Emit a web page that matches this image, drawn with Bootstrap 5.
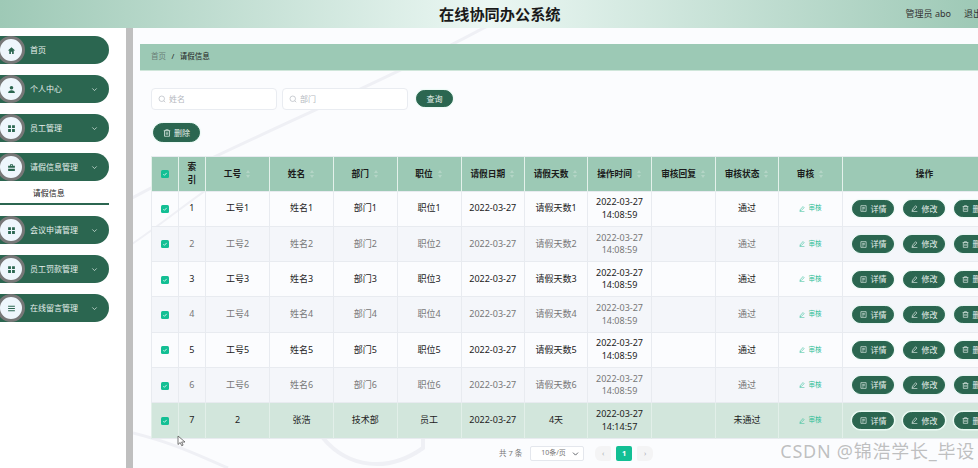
<!DOCTYPE html>
<html lang="zh-CN">
<head>
  <meta charset="UTF-8" />
  <meta name="viewport" content="width=device-width, initial-scale=1.0" />
  <title>在线协同办公系统</title>
  <link href="https://cdn.jsdelivr.net/npm/bootstrap@5.3.0/dist/css/bootstrap.min.css" rel="stylesheet" />
  <style>
    html, body { height: 100%; }
    body {
      overflow: hidden;
      background: #fff;
      color: #222;
      font-family: "Noto Sans", "Noto Sans CJK SC", sans-serif;
      font-size: 9px;
    }
    svg { display: block; flex: none; }

    .top-bar {
      height: 28px;
      padding-left: 439px;
      background: linear-gradient(90deg, #9ec9b6, #ebf7f3 50%, #9ec9b6);
    }
    .top-title { font-size: 15.2px; font-weight: 700; color: #1a1a1a; white-space: nowrap; }
    .top-user { font-size: 9px; color: #333; gap: 13px; margin-right: -4px; white-space: nowrap; }

    .page-body { height: 440px; }
    .side-menu { width: 133px; border-right: 7px solid #bfbfbf; padding-top: 8px; gap: 11px; }
    .menu-pill {
      width: 108.5px;
      height: 28px;
      padding-right: 11px;
      background: #2b6650;
      color: #e6f0ec;
      font-size: 8px;
      border-radius: 0 14px 14px 0;
    }
    .menu-dot {
      width: 28px;
      height: 28px;
      margin-left: -3px;
      margin-right: 5px;
      background: #eef6fc;
      border: 3px solid #777;
      color: #2b6650;
    }
    .menu-arrow { margin-left: auto; }
    .menu-sub {
      width: 108.5px;
      height: 24px;
      margin-top: -11px;
      padding: 2px 11px 0 0;
      font-size: 8px;
      color: #222;
      border-bottom: 2px solid #2b6650;
    }

    .main-area { background: #fbfcfe; padding: 16px 0 0 7px; min-width: 0; }
    .back-swoosh { left: 0; top: 0; z-index: 0; }
    .main-area > *:not(.back-swoosh) { position: relative; z-index: 1; }
    .crumb-bar { height: 27px; margin-bottom: 16.5px; padding-left: 11px; background: #9cc9b5; border-bottom: 1px solid #cfe6da; }
    .crumb-bar .breadcrumb { font-size: 7.5px; --bs-breadcrumb-margin-bottom: 0; --bs-breadcrumb-item-padding-x: 5.5px; --bs-breadcrumb-divider-color: #222; }
    .crumb-bar .breadcrumb-item a { color: #6a7d75; text-decoration: none; }
    .crumb-bar .breadcrumb-item.active { color: #222; }

    .search-row { padding-left: 11px; height: 22px; gap: 5px; margin-bottom: 13.5px; }
    .search-box {
      width: 126px;
      height: 22px;
      padding-left: 6px;
      gap: 3px;
      background: #fff;
      border: 1px solid #e9ecf1;
      border-radius: 4px;
      color: #b5b9c0;
    }
    .search-box .form-control { border: 0; padding: 0; font-size: 8px; background: transparent; border-radius: 0; box-shadow: none; }
    .search-box .form-control::placeholder { color: #b5b9c0; }
    .dark-btn {
      --bs-btn-bg: #2b6650;
      --bs-btn-border-color: #2b6650;
      --bs-btn-color: #e6f0ec;
      --bs-btn-hover-bg: #23543f;
      --bs-btn-hover-border-color: #23543f;
      --bs-btn-hover-color: #fff;
      --bs-btn-padding-x: 0;
      --bs-btn-padding-y: 0;
      --bs-btn-font-size: 8px;
      --bs-btn-line-height: 1;
      box-shadow: 0 0 2px #c9f2df;
    }
    .btn-query { width: 37px; height: 17.5px; margin-left: 3px; }
    .btn-remove { width: 47px; height: 19px; margin: 0 0 14px 13px; gap: 3px; }

    .table-clip { margin-left: 11px; overflow: hidden; }
    .leave-table {
      table-layout: fixed;
      width: 855px;
      margin: 0;
      font-size: 9px;
      --bs-table-bg: transparent;
      --bs-table-border-color: #e8ebf0;
    }
    .leave-table > :not(caption) > * > * { padding: 0; text-align: center; vertical-align: middle; line-height: 12.5px; }
    .leave-table thead th {
      height: 34.6px;
      background: #9cc9b5;
      border-color: #e4f1eb;
      color: #1b1b1b;
      font-size: 8.7px;
      font-weight: 700;
    }
    .leave-table tbody tr { height: 35.3px; }
    .leave-table tbody td { color: #222; font-weight: 400; }
    .leave-table tbody tr:nth-child(even) td { background: #f4f6fa; color: #777; }
    .leave-table tbody tr.row-new td { background: #d2e6dc; color: #222; border-color: #e2efe9; }
    .sort-mark { display: inline-block; width: 5px; height: 8px; margin-left: 5px; vertical-align: -1px; position: relative; }
    .sort-mark::before, .sort-mark::after {
      content: "";
      position: absolute;
      left: 0;
      border-left: 2.5px solid transparent;
      border-right: 2.5px solid transparent;
    }
    .sort-mark::before { top: 0; border-bottom: 3px solid #b4d5c6; }
    .sort-mark::after { bottom: 0; border-top: 3px solid #b4d5c6; }
    .tick-box {
      display: inline-flex;
      align-items: center;
      justify-content: center;
      width: 8px;
      height: 8px;
      background: #13bf94;
      border-radius: 1.5px;
      vertical-align: middle;
    }
    .audit-link { color: #2dbd96; font-size: 6.6px; gap: 3px; text-decoration: none; }
    .row-btns { padding-left: 9px; gap: 9px; }
    .btn-row { width: 42px; height: 17.5px; gap: 4px; font-size: 8px; }
    .row-new .btn-row { box-shadow: 0 0 0 1.5px #eafaf3; }

    .pager-row { height: 30px; padding-left: 359px; gap: 8px; color: #777; font-size: 7.5px; }
    .pager-row .form-select {
      width: 54px;
      height: 15px;
      margin-right: 3px;
      padding: 0 0 0 10px;
      font-size: 7px;
      color: #777;
      border-color: #e4e7ed;
      border-radius: 2px;
      background-position: right 4px center;
      background-size: 7px 6px;
      box-shadow: none;
    }
    .pager-row .pagination { margin: 0; gap: 6px; }
    .pager-row .page-link {
      width: 16px;
      height: 15px;
      padding: 0;
      display: flex;
      align-items: center;
      justify-content: center;
      font-size: 7.5px;
      line-height: 1;
      background: #f4f4f5;
      border: 0;
      border-radius: 2px;
      color: #a8abb2;
    }
    .pager-row .page-item.active .page-link { background: #12bf94; color: #fff; font-weight: 700; }

    .csdn-mark {
      right: 3px;
      bottom: 7px;
      z-index: 5;
      font-size: 18px;
      line-height: 20px;
      letter-spacing: .75px;
      color: rgba(130, 130, 130, .5);
      white-space: nowrap;
    }
    .mouse-arrow { left: 177px; top: 435px; z-index: 6; }
  </style>
</head>
<body>
  <svg width="0" height="0" class="position-absolute">
    <symbol id="i-home" viewBox="0 0 16 16"><path fill="currentColor" d="M8 2 1.500 8H4v6h3v-4h2v4h3V8h2.500z"/></symbol>
    <symbol id="i-user" viewBox="0 0 16 16"><circle fill="currentColor" cx="8" cy="5" r="3.200"/><path fill="currentColor" d="M2 14c0-3 2.500-4.500 6-4.500s6 1.500 6 4.500z"/></symbol>
    <symbol id="i-grid" viewBox="0 0 16 16"><path fill="currentColor" d="M2 2h5v5H2zM9 2h5v5H9zM2 9h5v5H2zM9 9h5v5H9z"/></symbol>
    <symbol id="i-case" viewBox="0 0 16 16"><path fill="currentColor" d="M5.500 2h5v3H14v9H2V5h3.500zM7 3.500V5h2V3.500zM2 8.500v1.500h12V8.500z"/></symbol>
    <symbol id="i-list" viewBox="0 0 16 16"><path fill="currentColor" d="M2 3h12v2H2zM2 7h12v2H2zM2 11h12v2H2z"/></symbol>
    <symbol id="i-down" viewBox="0 0 16 16"><path fill="none" stroke="currentColor" stroke-width="1.600" d="m3 5.500 5 5 5-5"/></symbol>
    <symbol id="i-find" viewBox="0 0 16 16"><circle fill="none" stroke="currentColor" stroke-width="1.400" cx="7.500" cy="7.500" r="5.500"/><path fill="none" stroke="currentColor" stroke-width="1.400" d="m11.500 11.500 3 3"/></symbol>
    <symbol id="i-bin" viewBox="0 0 16 16"><path fill="none" stroke="currentColor" stroke-width="1.500" d="M1.500 3.500h13M5.500 3.500V1.500h5v2M3 3.500v11h10v-11M6.500 6.500v5M9.500 6.500v5"/></symbol>
    <symbol id="i-doc" viewBox="0 0 16 16"><path fill="none" stroke="currentColor" stroke-width="1.500" d="M2 1.500h12v13H2zM5 5.500h6M5 8.500h6M5 11.500h3"/></symbol>
    <symbol id="i-pen" viewBox="0 0 16 16"><path fill="none" stroke="currentColor" stroke-width="1.500" d="M10.500 1.500 13.500 4.500 6 12 2.500 13 3.500 9.500zM1.500 15h13"/></symbol>
    <symbol id="i-tick" viewBox="0 0 16 16"><path fill="none" stroke="currentColor" stroke-width="2" d="m3.500 8.500 3 3 6-6.500"/></symbol>
  </svg>

  <header class="top-bar d-flex align-items-center">
    <div class="top-title">在线协同办公系统</div>
    <div class="top-user d-flex ms-auto">
      <span>管理员 abo</span>
      <span>退出</span>
    </div>
  </header>

  <div class="page-body d-flex">
    <aside class="side-menu d-flex flex-column flex-shrink-0" id="menu"></aside>

    <main class="main-area flex-grow-1 position-relative overflow-hidden">
      <svg class="back-swoosh position-absolute" width="845" height="440" viewBox="0 0 845 440">
        <g fill="none" stroke="#eff0f5">
          <path stroke-width="3" d="M-10 175C90 120 240 60 360 -5"/>
          <path stroke-width="2" d="M-10 222C40 190 80 150 130 130"/>
          <path stroke-width="3" d="M0 405C40 415 60 425 95 440"/>
          <path stroke-width="4" d="M190 410C215 440 255 445 290 420V395"/>
        </g>
      </svg>

      <nav class="crumb-bar d-flex align-items-center">
        <ol class="breadcrumb">
          <li class="breadcrumb-item"><a href="#">首页</a></li>
          <li class="breadcrumb-item active">请假信息</li>
        </ol>
      </nav>

      <div class="search-row d-flex align-items-center">
        <label class="search-box d-flex align-items-center">
          <svg width="8" height="8"><use href="#i-find"/></svg>
          <input class="form-control" placeholder="姓名" />
        </label>
        <label class="search-box d-flex align-items-center">
          <svg width="8" height="8"><use href="#i-find"/></svg>
          <input class="form-control" placeholder="部门" />
        </label>
        <button class="btn dark-btn rounded-pill btn-query">查询</button>
      </div>

      <button class="btn dark-btn rounded-pill btn-remove d-flex align-items-center justify-content-center">
        <svg width="8" height="8"><use href="#i-bin"/></svg>删除
      </button>

      <div class="table-clip">
        <table class="table table-bordered leave-table">
          <colgroup>
            <col style="width:26.5px"><col style="width:27.5px"><col style="width:64px"><col style="width:64px"><col style="width:63.500px"><col style="width:64px"><col style="width:63.500px"><col style="width:63px"><col style="width:64px"><col style="width:64px"><col style="width:63px"><col style="width:64px"><col style="width:164px">
          </colgroup>
          <thead id="head"></thead>
          <tbody id="rows"></tbody>
        </table>
      </div>

      <div class="pager-row d-flex align-items-center">
        <span>共 7 条</span>
        <select class="form-select"><option>10条/页</option></select>
        <ul class="pagination">
          <li class="page-item"><a class="page-link" href="#">‹</a></li>
          <li class="page-item active"><a class="page-link" href="#">1</a></li>
          <li class="page-item"><a class="page-link" href="#">›</a></li>
        </ul>
      </div>
    </main>
  </div>

  <div class="csdn-mark position-absolute">CSDN @锦浩学长_毕设</div>
  <svg class="mouse-arrow position-absolute" width="9" height="12" viewBox="0 0 9 12">
    <path fill="#fff" stroke="#555" stroke-width=".8" d="M1 1v8.500l2.200-2 1.500 3.200 1.400-.6-1.500-3.100H8z"/>
  </svg>

  <script src="https://cdn.jsdelivr.net/npm/bootstrap@5.3.0/dist/js/bootstrap.bundle.min.js"></script>
  <script>
    const menus = [
      ["首页", "i-home", false],
      ["个人中心", "i-user", true],
      ["员工管理", "i-grid", true],
      ["请假信息管理", "i-case", true],
      ["会议申请管理", "i-grid", true],
      ["员工罚款管理", "i-grid", true],
      ["在线留言管理", "i-list", true]
    ];

    let menuHtml = "";
    for (const [name, icon, hasArrow] of menus) {
      menuHtml += `
        <div class="menu-pill d-flex align-items-center">
          <span class="menu-dot rounded-circle d-flex align-items-center justify-content-center flex-shrink-0">
            <svg width="9" height="9"><use href="#${icon}"/></svg>
          </span>
          <span>${name}</span>
          ${hasArrow ? '<svg class="menu-arrow" width="7" height="7"><use href="#i-down"/></svg>' : ""}
        </div>`;
      if (name === "请假信息管理") {
        menuHtml += '<div class="menu-sub d-flex align-items-center justify-content-center">请假信息</div>';
      }
    }
    document.getElementById("menu").innerHTML = menuHtml;

    const tick = '<span class="tick-box text-white"><svg width="6" height="6"><use href="#i-tick"/></svg></span>';
    const sortable = ["工号", "姓名", "部门", "职位", "请假日期", "请假天数", "操作时间", "审核回复", "审核状态", "审核"];
    document.getElementById("head").innerHTML = `
      <tr>
        <th>${tick}</th>
        <th>索<br>引</th>
        ${sortable.map(t => `<th>${t}<span class="sort-mark"></span></th>`).join("")}
        <th>操作</th>
      </tr>`;

    const rows = [];
    for (let i = 1; i <= 6; i++) {
      rows.push([i, "工号" + i, "姓名" + i, "部门" + i, "职位" + i, "请假天数" + i, "14:08:59", "通过"]);
    }
    rows.push([7, "2", "张浩", "技术部", "员工", "4天", "14:14:57", "未通过"]);

    let rowHtml = "";
    for (const r of rows) {
      rowHtml += `
        <tr class="${r[0] === 7 ? "row-new" : ""}">
          <td>${tick}</td>
          <td>${r[0]}</td>
          <td>${r[1]}</td>
          <td>${r[2]}</td>
          <td>${r[3]}</td>
          <td>${r[4]}</td>
          <td>2022-03-27</td>
          <td>${r[5]}</td>
          <td>2022-03-27<br>${r[6]}</td>
          <td></td>
          <td>${r[7]}</td>
          <td><a class="audit-link d-flex align-items-center justify-content-center" href="#"><svg width="6" height="6"><use href="#i-pen"/></svg>审核</a></td>
          <td>
            <div class="row-btns d-flex align-items-center">
              <button class="btn dark-btn rounded-pill btn-row d-flex align-items-center justify-content-center"><svg width="7" height="7"><use href="#i-doc"/></svg>详情</button>
              <button class="btn dark-btn rounded-pill btn-row d-flex align-items-center justify-content-center"><svg width="7" height="7"><use href="#i-pen"/></svg>修改</button>
              <button class="btn dark-btn rounded-pill btn-row d-flex align-items-center justify-content-center"><svg width="7" height="7"><use href="#i-bin"/></svg>删除</button>
            </div>
          </td>
        </tr>`;
    }
    document.getElementById("rows").innerHTML = rowHtml;
  </script>
</body>
</html>
